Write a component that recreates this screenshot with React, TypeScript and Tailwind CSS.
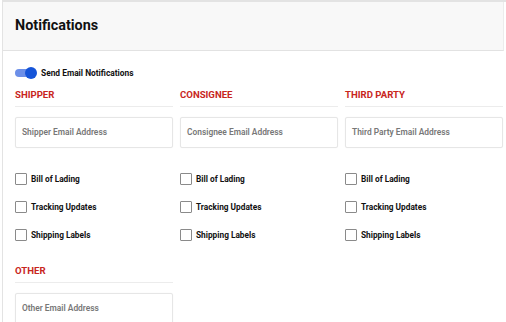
import React from "react";

const cols = [
  { title: "SHIPPER", ph: "Shipper Email Address" },
  { title: "CONSIGNEE", ph: "Consignee Email Address" },
  { title: "THIRD PARTY", ph: "Third Party Email Address" },
];
const opts = ["Bill of Lading", "Tracking Updates", "Shipping Labels"];

function Column({ title, ph, checks }: { title: string; ph: string; checks: boolean }) {
  return (
    <div className="w-[158px] flex flex-col">
      <div className="h-[26px] flex items-center border-b border-[#ececec] text-[9.6px] font-bold text-[#c8261d] leading-none pt-[2px]">
        {title}
      </div>
      <div className="mt-[10px] h-[31px] border border-[#e6e6e6] rounded-[2px] shadow-[0_0_1px_rgba(0,0,0,0.08)] flex items-center px-[6px] text-[8.4px] font-semibold text-[#777]">
        {ph}
      </div>
      {checks && (
        <div className="mt-[25px] flex flex-col gap-[16px]">
          {opts.map((o) => (
            <div key={o} className="flex items-center h-[12px]">
              <div className="w-[12px] h-[12px] border border-[#8a8a8a] rounded-[1px] bg-white" />
              <span className="ml-[4px] text-[8.3px] font-bold text-[#111]">{o}</span>
            </div>
          ))}
        </div>
      )}
    </div>
  );
}

export default function App() {
  return (
    <div className="w-[506px] h-[322px] bg-white overflow-hidden" style={{ fontFamily: "Roboto, 'Noto Sans', sans-serif" }}>
      <div className="ml-[2px] border-t-2 border-l border-[#e3e3e3] h-[322px]">
        <div className="h-[49px] bg-[#f8f8f8] border-b border-[#e2e2e2] flex items-center pl-[12px] mr-[2px] border-r border-r-[#ececec]">
          <span className="text-[14.4px] font-bold text-[#111]">Notifications</span>
        </div>
        <div className="pl-[12px]">
          <div className="mt-[16px] flex items-center h-[12px]">
            <div className="relative w-[22px] h-[12px]">
              <div className="absolute left-0 top-[2px] w-[20px] h-[8px] rounded-full bg-[#6c8fe8]" />
              <div className="absolute right-0 top-0 w-[12px] h-[12px] rounded-full bg-[#1554d8]" />
            </div>
            <span className="ml-[4px] text-[8.4px] font-bold text-[#111]">Send Email Notifications</span>
          </div>
          <div className="mt-[2px] flex gap-[7px]">
            {cols.map((c) => (
              <Column key={c.title} title={c.title} ph={c.ph} checks />
            ))}
          </div>
          <div className="mt-[16px]">
            <Column title="OTHER" ph="Other Email Address" checks={false} />
          </div>
        </div>
      </div>
    </div>
  );
}
